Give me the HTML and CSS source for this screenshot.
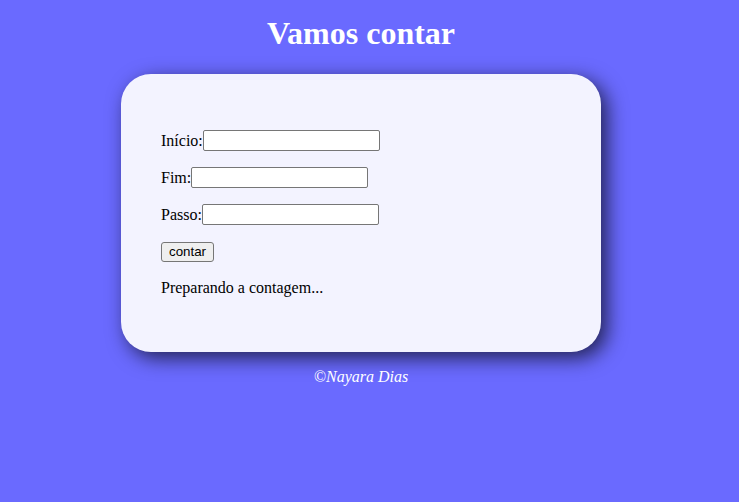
FILE: index.html
```html
<!DOCTYPE html>
<html lang="pt-BR">
<head>
<meta charset="utf-8">
<title>Vamos contar</title>
<link rel="stylesheet" href="styles.css">
</head>
<body>
<header class="header">
  <h1 class="title">Vamos contar</h1>
</header>
<section class="card">
  <p class="row"><label class="label" for="inicio">Início:</label><input class="field" type="number" id="inicio"></p>
  <p class="row"><label class="label" for="fim">Fim:</label><input class="field" type="number" id="fim"></p>
  <p class="row"><label class="label" for="passo">Passo:</label><input class="field" type="number" id="passo"></p>
  <p class="row"><button class="btn" type="button">contar</button></p>
  <p class="row result">Preparando a contagem...</p>
</section>
<footer class="footer">
  <p class="credit">&copy;Nayara Dias</p>
</footer>
</body>
</html>
```
FILE: styles.css
```css
html {
  background: #6a6aff;
}
body {
  margin: 0;
  padding: 0 17px 0 0;
  background: #6a6aff;
  font-family: "Liberation Serif", "Times New Roman", serif;
  font-size: 16px;
  color: #000;
}
.header {
  padding-top: 15px;
}
.title {
  margin: 0 0 22px 0;
  text-align: center;
  color: #fff;
  font-size: 32px;
  font-weight: bold;
  line-height: 37px;
}
.card {
  width: 480px;
  height: 278px;
  box-sizing: border-box;
  margin: 0 auto;
  padding: 40px;
  background: #f3f3ff;
  border-radius: 30px;
  box-shadow: 6px 6px 20px rgba(0, 0, 0, 0.68);
}
.row {
  margin: 16px 0;
  height: 21px;
  line-height: 21px;
  display: flex;
  align-items: center;
}
.label {
  line-height: 21px;
}
.field {
  width: 177px;
  height: 21px;
  box-sizing: border-box;
  margin: 0;
  padding: 1px 2px;
  border: 1px solid #767676;
  border-radius: 2px;
  background: #fff;
  font-family: "Liberation Sans", Arial, sans-serif;
  font-size: 13.33px;
  -moz-appearance: textfield;
}
.field::-webkit-outer-spin-button,
.field::-webkit-inner-spin-button {
  -webkit-appearance: none;
  margin: 0;
}
.btn {
  width: 53px;
  height: 20px;
  box-sizing: border-box;
  margin: 0;
  padding: 0 6px;
  border: 1px solid #767676;
  border-radius: 3px;
  background: #efefef;
  font-family: "Liberation Sans", Arial, sans-serif;
  font-size: 13.33px;
  color: #000;
  line-height: 16px;
}
.result {
  line-height: 19px;
  height: 19px;
}
.footer {
  text-align: center;
}
.credit {
  margin: 16px 0;
  color: #fff;
  font-style: italic;
  line-height: 18px;
}
```
